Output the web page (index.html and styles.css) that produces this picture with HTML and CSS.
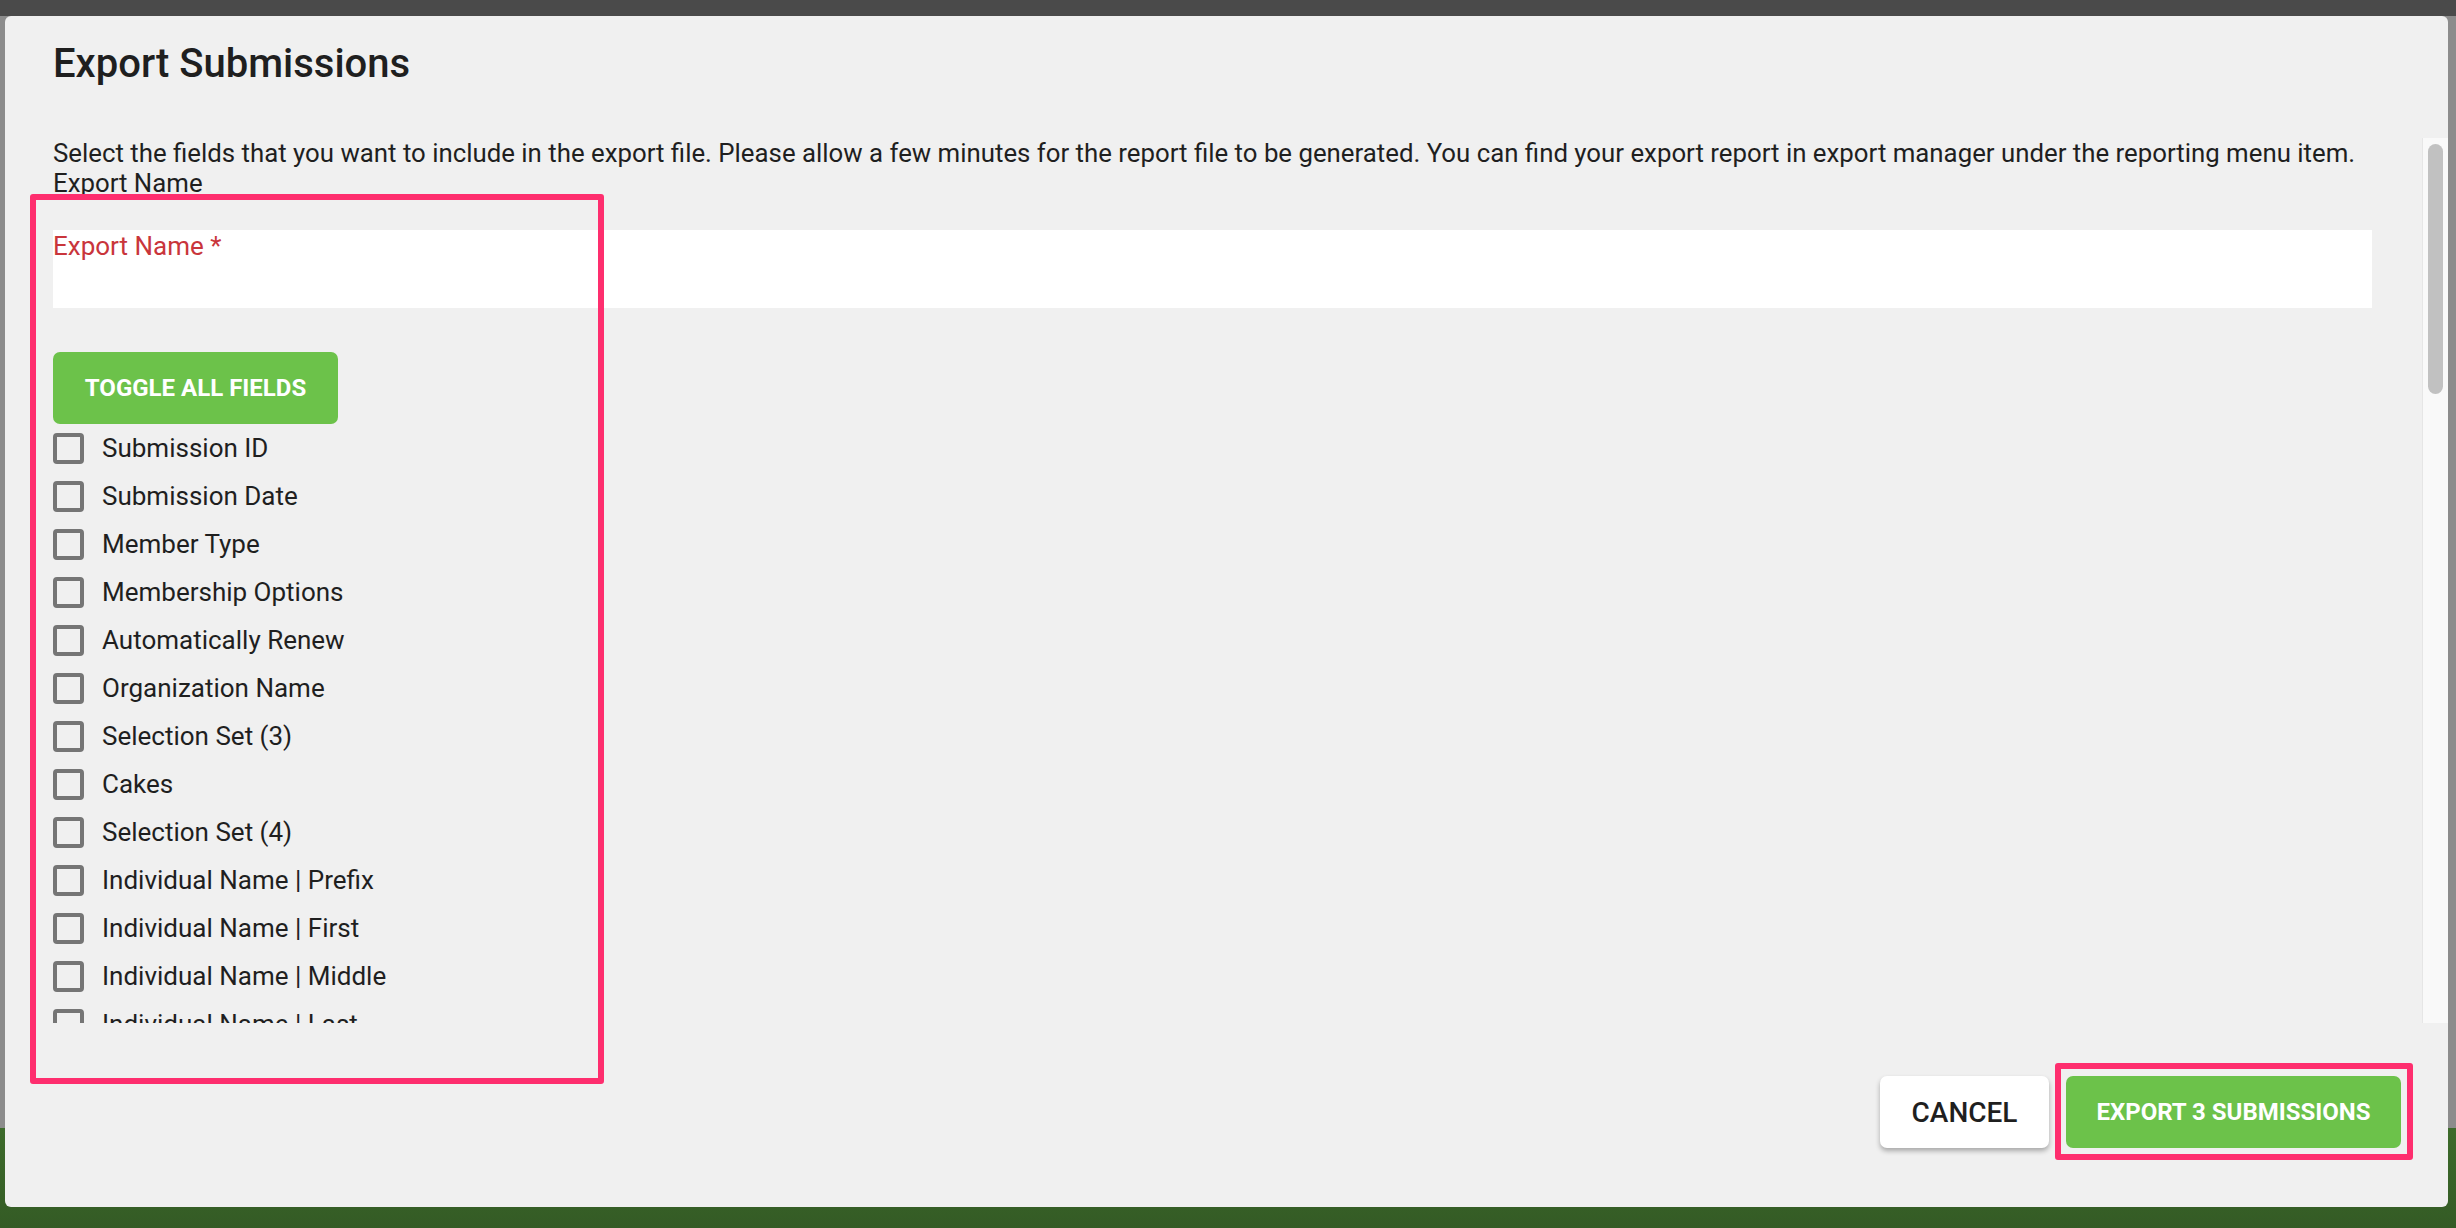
FILE: index.html
```html
<!DOCTYPE html>
<html lang="en">
<head>
    <meta charset="UTF-8">
    <meta name="viewport" content="width=device-width, initial-scale=1.0">
    <title>Export Submissions</title>
    <link rel="stylesheet" href="styles.css">
</head>
<body>
    <div class="backdrop">
        <div class="dialog">
            <div class="dialog-header">
                <h2 class="dialog-title">Export Submissions</h2>
            </div>
            <div class="dialog-content">
                <div class="dialog-body">
                    <p class="intro">Select the fields that you want to include in the export file. Please allow a few minutes for the report file to be generated. You can find your export report in export manager under the reporting menu item.<br>Export Name</p>
                    <div class="text-field">
                        <label class="text-field-label" for="exportName">Export Name *</label>
                        <input type="text" id="exportName" class="text-field-input">
                    </div>
                    <button class="btn btn-green btn-toggle">TOGGLE ALL FIELDS</button>
                    <ul class="field-list">
                        <li class="field-row"><span class="check"></span>Submission ID</li>
                        <li class="field-row"><span class="check"></span>Submission Date</li>
                        <li class="field-row"><span class="check"></span>Member Type</li>
                        <li class="field-row"><span class="check"></span>Membership Options</li>
                        <li class="field-row"><span class="check"></span>Automatically Renew</li>
                        <li class="field-row"><span class="check"></span>Organization Name</li>
                        <li class="field-row"><span class="check"></span>Selection Set (3)</li>
                        <li class="field-row"><span class="check"></span>Cakes</li>
                        <li class="field-row"><span class="check"></span>Selection Set (4)</li>
                        <li class="field-row"><span class="check"></span>Individual Name | Prefix</li>
                        <li class="field-row"><span class="check"></span>Individual Name | First</li>
                        <li class="field-row"><span class="check"></span>Individual Name | Middle</li>
                        <li class="field-row"><span class="check"></span>Individual Name | Last</li>
                        <li class="field-row"><span class="check"></span>Individual Name | Suffix</li>
                        <li class="field-row"><span class="check"></span>Email Address</li>
                        <li class="field-row"><span class="check"></span>Phone Number</li>
                    </ul>
                </div>
                <div class="scroll-track">
                    <div class="scroll-thumb"></div>
                </div>
            </div>
            <div class="dialog-footer">
                <button class="btn btn-white">CANCEL</button>
                <button class="btn btn-green btn-export">EXPORT 3 SUBMISSIONS</button>
            </div>
            <div class="mark mark-fields"></div>
            <div class="mark mark-export"></div>
        </div>
    </div>
</body>
</html>
```

FILE: styles.css
```css
html, body {
    margin: 0;
    padding: 0;
    height: 100%;
    overflow: hidden;
}
body {
    font-family: Roboto, 'Liberation Sans', sans-serif;
    color: #1f1f1f;
    background: linear-gradient(#4a4a4a 0, #4a4a4a 16px, #8c8c8c 16px, #8c8c8c 1128px, #3d6b2b 1128px, #345b25 1228px);
}
.backdrop {
    padding: 16px 8px 21px 5px;
    height: 100%;
    box-sizing: border-box;
}
.dialog {
    position: relative;
    height: 100%;
    background: #f0f0f0;
    border-radius: 6px;
    display: flex;
    flex-direction: column;
    overflow: hidden;
}
.dialog-header {
    height: 122px;
    box-sizing: border-box;
    padding: 25px 48px 0;
    flex: none;
}
.dialog-title {
    margin: 0;
    font-size: 40px;
    line-height: 46px;
    font-weight: 500;
    color: #1f1f1f;
}
.dialog-content {
    flex: 1;
    min-height: 0;
    display: flex;
}
.dialog-body {
    flex: 1;
    overflow: hidden;
    padding: 0 50px 0 48px;
}
.scroll-track {
    flex: none;
    width: 26px;
    background: #f9f9f9;
    border-left: 1px solid #e6e6e6;
    padding: 6px 5px 0 5px;
    box-sizing: border-box;
}
.scroll-thumb {
    height: 250px;
    background: #c1c1c1;
    border-radius: 8px;
}
.intro {
    margin: 0;
    font-size: 25.8px;
    line-height: 30px;
}
.text-field {
    margin-top: 32px;
    height: 78px;
    background: #ffffff;
}
.text-field-label {
    display: block;
    color: #c9353b;
    font-size: 26px;
    line-height: 30px;
    padding-top: 1px;
}
.text-field-input {
    border: none;
    outline: none;
    background: transparent;
    width: 100%;
    font-family: inherit;
    font-size: 26px;
    padding: 0;
}
.btn {
    font-family: Roboto, 'Liberation Sans', sans-serif;
    border: none;
    border-radius: 7px;
    height: 72px;
    padding: 0;
    cursor: pointer;
}
.btn-green {
    background: #6cc24a;
    color: #ffffff;
    font-weight: 700;
    font-size: 24px;
}
.btn-toggle {
    display: block;
    margin-top: 44px;
    width: 285px;
}
.btn-white {
    background: #ffffff;
    color: #1f1f1f;
    font-weight: 500;
    font-size: 28px;
    width: 169px;
    box-shadow: 0 3px 5px rgba(0, 0, 0, 0.3);
}
.btn-export {
    width: 335px;
}
.field-list {
    list-style: none;
    margin: 0;
    padding: 0;
}
.field-row {
    display: flex;
    align-items: center;
    height: 48px;
    font-size: 26px;
}
.check {
    width: 23px;
    height: 23px;
    border: 4px solid #757575;
    border-radius: 4px;
    margin-right: 18px;
    flex: none;
}
.dialog-footer {
    height: 184px;
    box-sizing: border-box;
    flex: none;
    display: flex;
    justify-content: flex-end;
    align-items: flex-start;
    gap: 17px;
    padding: 53px 47px 0 0;
}
.mark {
    position: absolute;
    border: 6px solid #fe2e6e;
    border-radius: 3px;
    box-sizing: border-box;
}
.mark-fields {
    left: 25px;
    top: 178px;
    width: 574px;
    height: 890px;
}
.mark-export {
    left: 2050px;
    top: 1047px;
    width: 358px;
    height: 97px;
}
```
